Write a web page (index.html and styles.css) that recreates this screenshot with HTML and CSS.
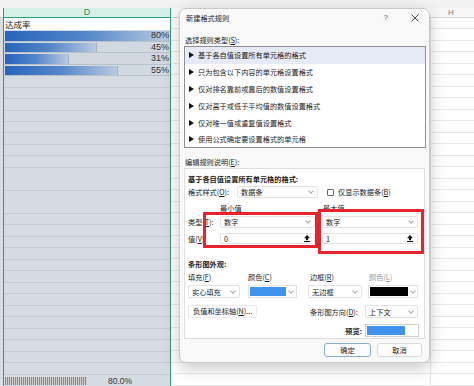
FILE: index.html
```html
<!DOCTYPE html>
<html>
<head>
  <meta charset="utf-8">
  <title>新建格式规则</title>
  <link rel="stylesheet" href="styles.css">
</head>
<body>
<div class="sheet">
  <div class="stub">
    <div class="head"></div>
    <div class="stub-body"></div>
  </div>
  <div class="col-d">
    <div class="head head-d">D</div>
    <div class="cell cell-title">达成率</div>
    <div class="cell cell-bar"><div class="bar" style="width:100%"></div><span class="pct">80%</span></div>
    <div class="cell cell-bar"><div class="bar" style="width:56.25%"></div><span class="pct">45%</span></div>
    <div class="cell cell-bar"><div class="bar" style="width:38.75%"></div><span class="pct">31%</span></div>
    <div class="cell cell-bar"><div class="bar" style="width:68.75%"></div><span class="pct">55%</span></div>
    <div class="empty-rows"></div>
    <div class="cell cell-foot"><div class="stripes"></div><span>80.0%</span></div>
  </div>
  <div class="col-rest">
    <div class="head head-rest">H</div>
    <div class="rest-body"></div>
  </div>
</div>

<div class="dialog">
  <div class="titlebar">
    <span class="title">新建格式规则</span>
    <span class="help">?</span>
    <svg class="close" viewBox="0 0 8 8"><path d="M0.5 0.5L7.5 7.5M7.5 0.5L0.5 7.5" stroke="#333" stroke-width="0.9"/></svg>
  </div>
  <div class="label">选择规则类型(<u>S</u>):</div>
  <ul class="rule-list">
    <li class="sel">基于各自值设置所有单元格的格式</li>
    <li>只为包含以下内容的单元格设置格式</li>
    <li>仅对排名靠前或靠后的数值设置格式</li>
    <li>仅对高于或低于平均值的数值设置格式</li>
    <li>仅对唯一值或重复值设置格式</li>
    <li>使用公式确定要设置格式的单元格</li>
  </ul>
  <div class="label">编辑规则说明(<u>E</u>):</div>
  <div class="group">
    <div class="row g-title">基于各自值设置所有单元格的格式:</div>
    <div class="row r-style">
      <span class="lab-style">格式样式(<u>O</u>):</span>
      <div class="dd dd-style"><span>数据条</span><i class="chev"></i></div>
      <span class="check"></span>
      <span>仅显示数据条(<u>B</u>)</span>
    </div>
    <div class="row minmax"><span class="min-lab">最小值</span><span>最大值</span></div>
    <div class="row r-type">
      <span class="lab-short">类型(<u>T</u>):</span>
      <div class="dd dd-val"><span>数字</span><i class="chev"></i></div>
      <div class="dd dd-val dd-max"><span>数字</span><i class="chev"></i></div>
    </div>
    <div class="row r-value">
      <span class="lab-short">值(<u>V</u>):</span>
      <div class="dd dd-val"><span>0</span><svg class="up" viewBox="0 0 6 7"><path d="M3 0L6 3.2H4V5.2H2V3.2H0Z" fill="#111"/><rect x="0" y="6" width="6" height="1" fill="#111"/></svg></div>
      <div class="dd dd-val dd-max"><span>1</span><svg class="up" viewBox="0 0 6 7"><path d="M3 0L6 3.2H4V5.2H2V3.2H0Z" fill="#111"/><rect x="0" y="6" width="6" height="1" fill="#111"/></svg></div>
    </div>

    <div class="row g-title g-look">条形图外观:</div>
    <div class="grid4 r-labels">
      <span>填充(<u>F</u>)</span>
      <span>颜色(<u>C</u>)</span>
      <span class="lab-3">边框(<u>R</u>)</span>
      <span class="lab-4 muted">颜色(<u>L</u>)</span>
    </div>
    <div class="grid4 r-controls">
      <div class="dd dd-fill"><span>实心填充</span><i class="chev"></i></div>
      <div class="swatch-btn sw-blue"><span class="swatch"></span><i class="chev"></i></div>
      <div class="dd dd-border"><span>无边框</span><i class="chev"></i></div>
      <div class="swatch-btn sw-black"><span class="swatch"></span><i class="chev"></i></div>
    </div>
    <div class="grid4 r-axis">
      <div class="btn-axis">负值和坐标轴(<u>N</u>)...</div>
      <span class="lab-3">条形图方向(<u>D</u>):</span>
      <div class="dd dd-dir"><span>上下文</span><i class="chev"></i></div>
    </div>
    <div class="grid4 r-preview">
      <span class="prev-lab">预览:</span>
      <div class="preview"><span class="prev-bar"></span></div>
    </div>

    <div class="mark mark-min"></div>
    <div class="mark mark-max"></div>
  </div>
  <div class="buttons">
    <div class="btn btn-ok">确定</div>
    <div class="btn btn-cancel">取消</div>
  </div>
</div>
</body>
</html>
```

FILE: styles.css
```css
* {
    box-sizing: border-box;
}
body {
    margin: 0;
    width: 474px;
    height: 386px;
    overflow: hidden;
    position: relative;
    background: #fff;
    font-family: "Noto Sans CJK SC", "Noto Sans", sans-serif;
    font-size: 7.2px;
    color: #1b1b1b;
}
u {
    text-underline-offset: 1px;
}

/* spreadsheet behind the dialog */
.sheet {
    display: flex;
    height: 386px;
    padding-top: 8px;
    background: #f2f2f2;
}
.head {
    height: 10px;
    flex: none;
}
.stub {
    width: 3px;
    display: flex;
    flex-direction: column;
}
.stub .head {
    background: #f4f4f4;
    border-bottom: 1px solid #cfcfcf;
}
.stub-body {
    flex: 1;
    background: #d9dde2;
}
.col-d {
    width: 168px;
    display: flex;
    flex-direction: column;
    border-left: 1px solid #2f9e78;
    border-right: 1px solid #2f9e78;
}
.head-d {
    background: #d5f1e7;
    border-bottom: 1px solid #2f9e78;
    color: #2b8f6c;
    font: 9px/9px "Liberation Sans", sans-serif;
    text-align: center;
}
.cell {
    flex: none;
}
.cell-title {
    height: 12px;
    background: #fff;
    font-size: 8.5px;
    line-height: 12px;
    padding-left: 1px;
    color: #222;
}
.cell-bar {
    height: 11.5px;
    display: grid;
    background: #d2d8df;
    border-bottom: 1px solid #b8c0c9;
    padding: 1px 1px 0 1px;
}
.bar,
.pct {
    grid-area: 1 / 1;
}
.bar {
    background: linear-gradient(to right, #2864bb, #5487c9 50%, #b9cadf);
    border-right: 1px solid #9fb0c4;
}
.pct {
    justify-self: end;
    font: 9px/9.5px "Liberation Sans", sans-serif;
    color: #333;
}
.empty-rows {
    flex: 1;
    background: repeating-linear-gradient(to bottom, #d5dbe2 0, #d5dbe2 10.5px, #c3cad2 10.5px, #c3cad2 11.5px);
}
.cell-foot {
    height: 10px;
    background: #d5dbe2;
    display: flex;
    align-items: center;
    padding-left: 1px;
}
.stripes {
    width: 82px;
    height: 8px;
    background: repeating-linear-gradient(to right, #8a8a8a 0, #8a8a8a 1px, #cfcfcf 1px, #cfcfcf 2px);
}
.cell-foot span {
    margin-left: 21px;
    font: 8.5px "Liberation Sans", sans-serif;
    color: #333;
}
.col-rest {
    flex: 1;
    display: flex;
    flex-direction: column;
}
.head-rest {
    background: #f7f7f7;
    border-bottom: 1px solid #d6d6d6;
    padding-left: 277px;
    font: 8px/9px "Liberation Sans", sans-serif;
    color: #777;
}
.rest-body {
    flex: 1;
    background:
        linear-gradient(to right, transparent 259px, #e2e2e2 259px, #e2e2e2 260px, transparent 260px),
        repeating-linear-gradient(to bottom, #fff 0, #fff 10.5px, #e9e9e9 10.5px, #e9e9e9 11.5px);
}

/* dialog window */
.dialog {
    position: absolute;
    left: 179px;
    top: 8px;
    width: 251px;
    height: 355px;
    background: #f9f9f9;
    border: 1px solid #c9c9c9;
    border-radius: 7px;
    box-shadow: 0 5px 16px rgba(0, 0, 0, 0.22);
    padding: 0 3px 0 4px;
}
.titlebar {
    height: 17px;
    display: flex;
    align-items: center;
    padding: 0 7px 0 2px;
}
.title {
    flex: 1;
}
.help {
    color: #555;
    margin-right: 23px;
    font: 8px "Liberation Sans", sans-serif;
}
.close {
    width: 8px;
    height: 8px;
}
.label {
    margin-top: 8px;
    height: 12px;
    line-height: 12px;
    padding-left: 1px;
}
.rule-list {
    list-style: none;
    margin: 0;
    padding: 0;
    height: 102px;
    background: #fff;
    border: 1px solid #8f8f8f;
}
.rule-list li {
    height: 16.8px;
    display: flex;
    align-items: center;
    padding-left: 4px;
}
.rule-list li::before {
    content: "";
    border-left: 5px solid #111;
    border-top: 3px solid transparent;
    border-bottom: 3px solid transparent;
    margin-right: 4px;
}
.rule-list .sel {
    background: #e6eaf6;
}

.group {
    position: relative;
    height: 171px;
    width: 241px;
    background: #fff;
    border: 1px solid #dedede;
    padding-left: 3px;
}
.row {
    display: flex;
    align-items: center;
    height: 12px;
}
.g-title {
    margin-top: 4px;
    font-weight: bold;
}
.r-style {
    margin-top: 1px;
}
.lab-style {
    width: 49px;
}
.dd {
    display: flex;
    align-items: center;
    justify-content: space-between;
    height: 12px;
    background: #fff;
    border: 1px solid #e3e3e3;
    border-radius: 2px;
    padding: 0 4px 0 3px;
}
.chev {
    width: 4px;
    height: 4px;
    border-right: 1px solid #a8a8a8;
    border-bottom: 1px solid #a8a8a8;
    transform: rotate(45deg);
    margin-top: -2px;
}
.dd-style {
    width: 81px;
}
.check {
    width: 7px;
    height: 7px;
    margin: 0 4px 0 9px;
    border: 1px solid #666;
    border-radius: 1px;
    background: #fff;
}
.minmax {
    margin-top: 5px;
    height: 10px;
    padding-left: 32px;
}
.min-lab {
    width: 103px;
}
.r-type {
    margin-top: 3px;
}
.r-value {
    margin-top: 5px;
    height: 11px;
}
.r-value .dd {
    height: 11px;
}
.lab-short {
    width: 32px;
}
.dd-val {
    width: 95px;
}
.dd-max {
    width: 96px;
    margin-left: 7px;
}
.up {
    width: 6px;
    height: 7px;
}
.g-look {
    margin-top: 14px;
}
.grid4 {
    display: grid;
    grid-template-columns: 60px 60px 60px 50px;
    align-items: center;
}
.r-labels {
    margin-top: 1px;
    height: 12px;
}
.lab-3 {
    padding-left: 2px;
}
.lab-4 {
    padding-left: 1px;
}
.muted {
    color: #9a9a9a;
}
.r-controls {
    margin-top: 2px;
    height: 13px;
}
.r-controls .dd {
    height: 13px;
}
.dd-fill {
    width: 52px;
}
.dd-border {
    width: 54px;
}
.swatch-btn {
    display: flex;
    align-items: center;
    height: 13px;
    border: 1px solid #e3e3e3;
    background: #fff;
    padding: 1px;
}
.swatch {
    height: 100%;
}
.swatch-btn .chev {
    margin-left: 3px;
}
.sw-blue {
    width: 49px;
}
.sw-blue .swatch {
    width: 36px;
    background: #3f93ec;
}
.sw-black {
    width: 50px;
}
.sw-black .swatch {
    width: 38px;
    background: #000;
}
.r-axis {
    margin-top: 7px;
    height: 13px;
}
.btn-axis {
    grid-column: 1 / 3;
    width: 69px;
    height: 13px;
    line-height: 11px;
    padding-left: 4px;
    border: 1px solid #ececec;
    border-radius: 2px;
    background: #fdfdfd;
}
.dd-dir {
    width: 53px;
    height: 13px;
    margin-left: -3px;
}
.r-preview {
    margin-top: 6px;
    height: 13px;
}
.prev-lab {
    grid-column: 3;
    justify-self: end;
    padding-right: 6px;
    font-weight: bold;
}
.preview {
    width: 54px;
    height: 13px;
    margin-left: -3px;
    border: 1px solid #cfcfcf;
    background: #fff;
    padding: 1px;
    display: flex;
}
.prev-bar {
    width: 38px;
    background: #3f93ec;
}
.mark {
    position: absolute;
    border: 3px solid #e8232b;
}
.mark-min {
    left: 18px;
    top: 43px;
    width: 115px;
    height: 36px;
}
.mark-max {
    left: 133px;
    top: 40px;
    width: 106px;
    height: 45px;
}

.buttons {
    display: flex;
    justify-content: flex-end;
    gap: 6px;
    margin-top: 4px;
    padding-right: 4px;
}
.btn {
    height: 14px;
    line-height: 12px;
    text-align: center;
    background: #fdfdfd;
    border: 1px solid #dadada;
    border-radius: 3px;
}
.btn-ok {
    width: 47px;
    border-color: #86aed0;
}
.btn-cancel {
    width: 45px;
}
```
